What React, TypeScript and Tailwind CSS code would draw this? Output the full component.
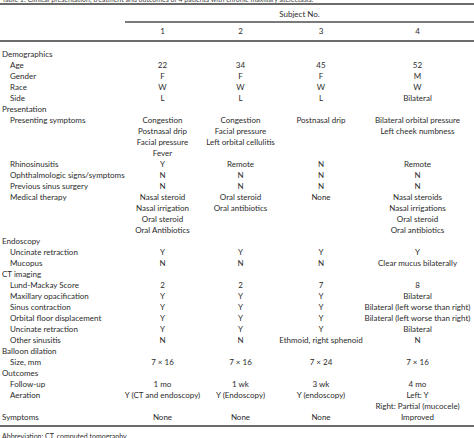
import React from "react";

type Cell = string | string[];
type Row = { label: string; cat?: boolean; top?: boolean; v?: Cell[] };

const BL = "Bilateral (left worse than right)";

const rows: Row[] = [
  { label: "Demographics", cat: true },
  { label: "Age", v: ["22", "34", "45", "52"] },
  { label: "Gender", v: ["F", "F", "F", "M"] },
  { label: "Race", v: ["W", "W", "W", "W"] },
  { label: "Side", v: ["L", "L", "L", "Bilateral"] },
  { label: "Presentation", cat: true },
  {
    label: "Presenting symptoms",
    v: [
      ["Congestion", "Postnasal drip", "Facial pressure", "Fever"],
      ["Congestion", "Facial pressure", "Left orbital cellulitis"],
      ["Postnasal drip"],
      ["Bilateral orbital pressure", "Left cheek numbness"],
    ],
  },
  { label: "Rhinosinusitis", v: ["Y", "Remote", "N", "Remote"] },
  { label: "Ophthalmologic signs/symptoms", v: ["N", "N", "N", "N"] },
  { label: "Previous sinus surgery", v: ["N", "N", "N", "N"] },
  {
    label: "Medical therapy",
    v: [
      ["Nasal steroid", "Nasal irrigation", "Oral steroid", "Oral Antibiotics"],
      ["Oral steroid", "Oral antibiotics"],
      ["None"],
      ["Nasal steroids", "Nasal irrigations", "Oral steroid", "Oral antibiotics"],
    ],
  },
  { label: "Endoscopy", cat: true },
  { label: "Uncinate retraction", v: ["Y", "Y", "Y", "Y"] },
  { label: "Mucopus", v: ["N", "N", "N", "Clear mucus bilaterally"] },
  { label: "CT imaging", cat: true },
  { label: "Lund-Mackay Score", v: ["2", "2", "7", "8"] },
  { label: "Maxillary opacification", v: ["Y", "Y", "Y", "Bilateral"] },
  { label: "Sinus contraction", v: ["Y", "Y", "Y", BL] },
  { label: "Orbital floor displacement", v: ["Y", "Y", "Y", BL] },
  { label: "Uncinate retraction", v: ["Y", "Y", "Y", "Bilateral"] },
  { label: "Other sinusitis", v: ["N", "N", "Ethmoid, right sphenoid", "N"] },
  { label: "Balloon dilation", cat: true },
  { label: "Size, mm", v: ["7 × 16", "7 × 16", "7 × 24", "7 × 16"] },
  { label: "Outcomes", cat: true },
  { label: "Follow-up", v: ["1 mo", "1 wk", "3 wk", "4 mo"] },
  {
    label: "Aeration",
    v: ["Y (CT and endoscopy)", "Y (Endoscopy)", "Y (endoscopy)", ["Left: Y", "Right: Partial (mucocele)"]],
  },
  { label: "Symptoms", top: true, v: ["None", "None", "None", "Improved"] },
];

const grid = "grid grid-cols-[125px_75px_81px_80px_113px]";

function CellView({ c }: { c: Cell }) {
  const lines = Array.isArray(c) ? c : [c];
  return (
    <div className="flex flex-col items-center">
      {lines.map((l, i) => (
        <div key={i} className="whitespace-nowrap h-[11px]">
          {l}
        </div>
      ))}
    </div>
  );
}

export default function App() {
  return (
    <div
      className="w-[474px] h-[438px] overflow-hidden bg-white text-[#2b2b2b] text-[8px] leading-[11px]"
      style={{ fontFamily: "Lato, 'Open Sans', sans-serif" }}
    >
      <div className="-mt-[5px] h-[8px] pl-[2px] text-[7px] leading-[8px] whitespace-nowrap text-[#444]">
        Table 1. Clinical presentation, treatment and outcomes of 4 patients with chronic maxillary atelectasis.
      </div>
      <div className="h-[2px] bg-[#6b6b6b]" />
      <div className={grid + " pt-[4px]"}>
        <div />
        <div className="col-span-4 text-center pl-[0px] h-[11px]">Subject No.</div>
      </div>
      <div className="flex pt-[1px]">
        <div className="w-[125px]" />
        <div className="flex-1 h-[1.5px] bg-[#7a7a7a]" />
      </div>
      <div className={grid + " pt-[3px] h-[17px]"}>
        <div />
        <div className="text-center">1</div>
        <div className="text-center">2</div>
        <div className="text-center">3</div>
        <div className="text-center">4</div>
      </div>
      <div className="h-[2px] bg-[#6b6b6b]" />
      <div className="pt-[7px]">
        {rows.map((r, i) => (
          <div key={i} className={grid}>
            <div className={"whitespace-nowrap h-[11px] " + (r.cat || r.top ? "pl-[2px]" : "pl-[10px]")}>
              {r.label}
            </div>
            {r.v ? r.v.map((c, j) => <CellView key={j} c={c} />) : null}
          </div>
        ))}
      </div>
      <div className="h-[2px] bg-[#6b6b6b] mt-[2px]" />
      <div className="pl-[2px] pt-[5px] text-[7px] leading-[9px] whitespace-nowrap">
        Abbreviation: CT, computed tomography.
      </div>
    </div>
  );
}
